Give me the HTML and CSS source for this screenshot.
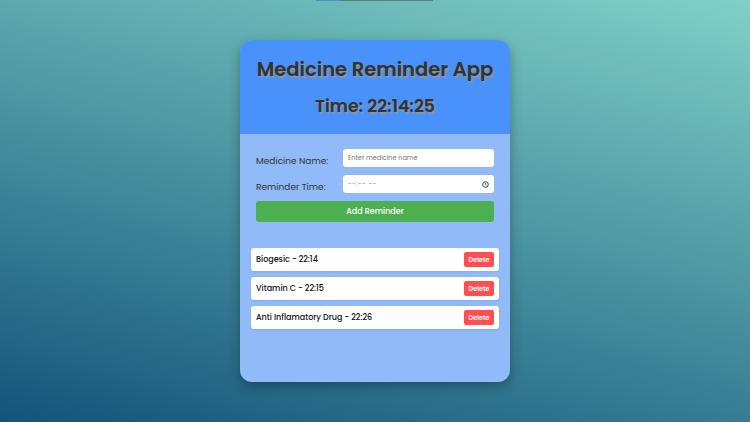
FILE: index.html
```html
<!DOCTYPE html>
<html lang="en">
<head>
<meta charset="utf-8">
<title>Medicine Reminder App</title>
<link rel="stylesheet" href="styles.css">
</head>
<body>
<div class="topbar"><span class="topbar-fill"></span></div>
<main class="card">
  <header class="card-header">
    <h1 class="title">Medicine Reminder App</h1>
    <h2 class="clock">Time: 22:14:25</h2>
  </header>
  <section class="card-body">
    <form class="form">
      <div class="row">
        <label class="label" for="med">Medicine Name:</label>
        <div class="input"><span class="placeholder">Enter medicine name</span></div>
      </div>
      <div class="row">
        <label class="label" for="time">Reminder Time:</label>
        <div class="input time"><span class="placeholder">--:-- --</span>
          <svg class="clock-icon" viewBox="0 0 10 10" width="7" height="7"><circle cx="5" cy="5" r="4" fill="none" stroke="#333" stroke-width="1.3"/><path d="M5 2.6V5.2L6.6 6.2" fill="none" stroke="#333" stroke-width="1.1"/></svg>
        </div>
      </div>
      <button type="button" class="add">Add Reminder</button>
    </form>
    <ul class="list">
      <li class="item"><span>Biogesic - 22:14</span><button type="button" class="del">Delete</button></li>
      <li class="item"><span>Vitamin C - 22:15</span><button type="button" class="del">Delete</button></li>
      <li class="item"><span>Anti Inflamatory Drug - 22:26</span><button type="button" class="del">Delete</button></li>
    </ul>
  </section>
</main>
</body>
</html>
```
FILE: styles.css
```css
* { box-sizing: border-box; }
html, body { height: 100%; }
body {
  margin: 0;
  font-family: "Poppins", "Inter", "DejaVu Sans", sans-serif;
  background: linear-gradient(15deg, #13547a 0%, #80d0c7 100%);
  display: flex;
  align-items: center;
  justify-content: center;
  position: relative;
}
.topbar {
  position: absolute;
  top: 0;
  left: 316px;
  width: 117px;
  height: 1px;
  background: #5c7f84;
}
.topbar-fill {
  display: block;
  width: 24px;
  height: 1px;
  background: #4a93c6;
}
.card {
  width: 270px;
  height: 342px;
  border-radius: 12px;
  overflow: hidden;
  background: #90bbf8;
  box-shadow: 0 4px 12px rgba(0, 0, 0, 0.3);
  display: flex;
  flex-direction: column;
}
.card-header {
  background: #4a92fb;
  height: 94px;
  display: flex;
  flex-direction: column;
  align-items: center;
  padding-top: 17px;
}
.title {
  margin: 0;
  font-size: 19.5px;
  font-weight: 600;
  color: #333;
  line-height: 26px;
  text-shadow: 1.5px 1.5px 1px #8f96a0;
}
.clock {
  margin: 12px 0 0;
  font-size: 17.3px;
  font-weight: 600;
  color: #333;
  line-height: 22px;
  text-shadow: 1.5px 1.5px 1px #8f96a0;
}
.card-body {
  flex: 1;
  padding: 15px 11px 0 11px;
}
.form {
  padding: 0 5px;
  display: flex;
  flex-direction: column;
}
.row {
  display: flex;
  align-items: center;
  height: 18px;
  margin-bottom: 8px;
}
.label {
  width: 87px;
  font-size: 9px;
  color: #333;
  padding-top: 6px;
}
.input {
  flex: 1;
  height: 18px;
  background: #fff;
  border-radius: 3px;
  display: flex;
  align-items: center;
  justify-content: space-between;
  padding: 0 5px;
}
.placeholder {
  font-size: 6.5px;
  color: #757575;
}
.time .placeholder { color: #8a8a8a; letter-spacing: 0.5px; }
.clock-icon { display: block; }
.add {
  height: 21px;
  border: 0;
  border-radius: 3px;
  background: #4caf50;
  color: #fff;
  font-family: inherit;
  font-size: 8px;
  font-weight: 500;
  padding: 0;
}
.list {
  list-style: none;
  margin: 26px 0 0;
  padding: 0;
}
.item {
  height: 23px;
  background: #fff;
  border-radius: 3px;
  margin-bottom: 6px;
  padding: 0 5px;
  display: flex;
  align-items: center;
  justify-content: space-between;
  font-size: 8px;
  font-weight: 500;
  color: #111;
  box-shadow: 0 1px 2px rgba(0, 0, 0, 0.08);
}
.del {
  width: 30px;
  height: 15px;
  border: 0;
  border-radius: 2px;
  background: #ff4d52;
  color: #fff;
  font-family: inherit;
  font-size: 6.5px;
  font-weight: 600;
  padding: 0;
}
```
